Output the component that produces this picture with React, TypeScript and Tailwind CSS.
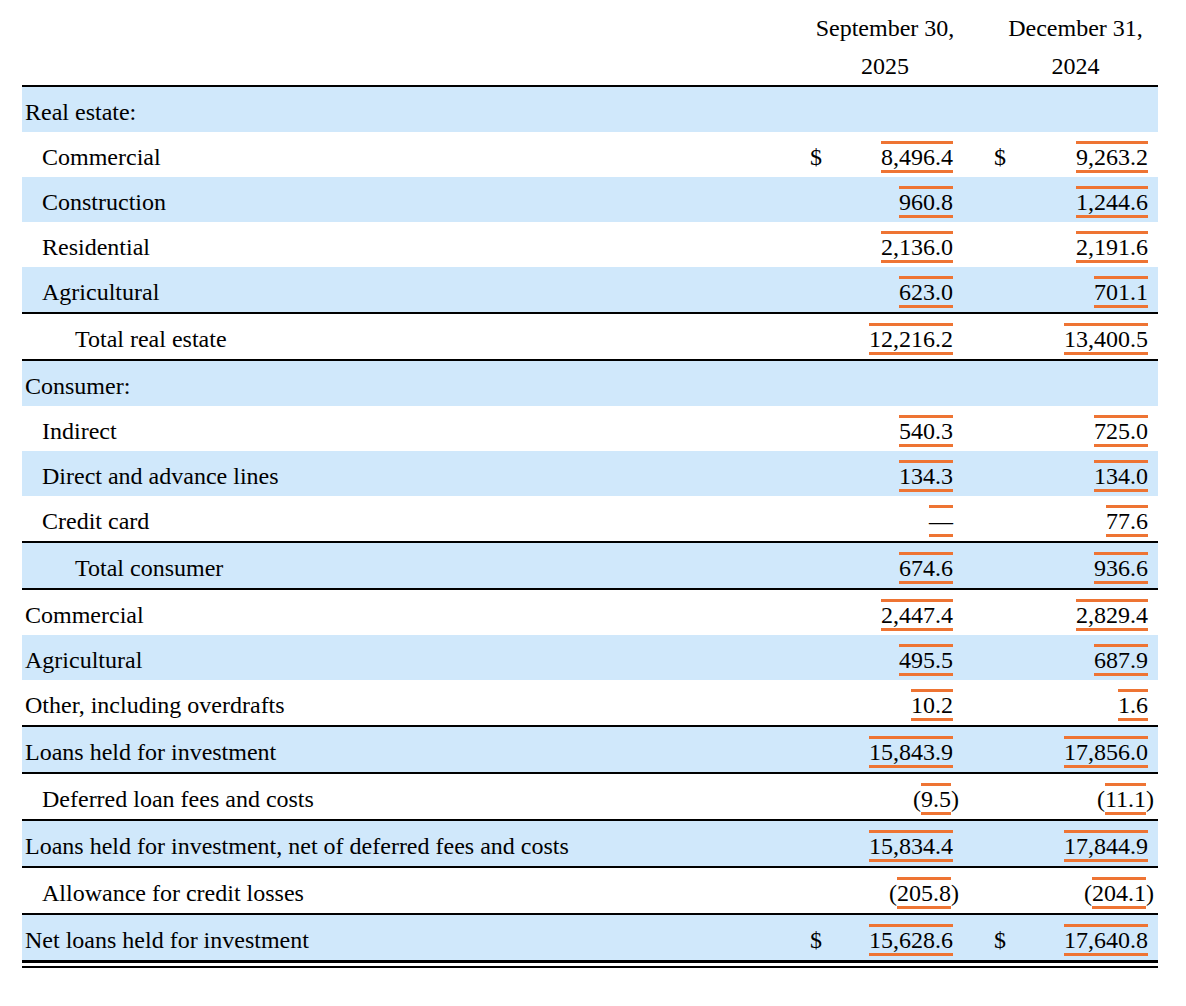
type Row = {
  label: string;
  indent: 0 | 1 | 2;
  a?: string;
  b?: string;
  neg?: boolean;
  dollar?: boolean;
  line?: "single" | "double";
};

const rows: Row[] = [
  { label: "Real estate:", indent: 0 },
  { label: "Commercial", indent: 1, a: "8,496.4", b: "9,263.2", dollar: true },
  { label: "Construction", indent: 1, a: "960.8", b: "1,244.6" },
  { label: "Residential", indent: 1, a: "2,136.0", b: "2,191.6" },
  { label: "Agricultural", indent: 1, a: "623.0", b: "701.1", line: "single" },
  { label: "Total real estate", indent: 2, a: "12,216.2", b: "13,400.5", line: "single" },
  { label: "Consumer:", indent: 0 },
  { label: "Indirect", indent: 1, a: "540.3", b: "725.0" },
  { label: "Direct and advance lines", indent: 1, a: "134.3", b: "134.0" },
  { label: "Credit card", indent: 1, a: "—", b: "77.6", line: "single" },
  { label: "Total consumer", indent: 2, a: "674.6", b: "936.6", line: "single" },
  { label: "Commercial", indent: 0, a: "2,447.4", b: "2,829.4" },
  { label: "Agricultural", indent: 0, a: "495.5", b: "687.9" },
  { label: "Other, including overdrafts", indent: 0, a: "10.2", b: "1.6", line: "single" },
  { label: "Loans held for investment", indent: 0, a: "15,843.9", b: "17,856.0", line: "single" },
  { label: "Deferred loan fees and costs", indent: 1, a: "9.5", b: "11.1", neg: true, line: "single" },
  {
    label: "Loans held for investment, net of deferred fees and costs",
    indent: 0,
    a: "15,834.4",
    b: "17,844.9",
    line: "single",
  },
  { label: "Allowance for credit losses", indent: 1, a: "205.8", b: "204.1", neg: true, line: "single" },
  { label: "Net loans held for investment", indent: 0, a: "15,628.6", b: "17,640.8", dollar: true, line: "double" },
];

const indents = ["pl-[3px]", "pl-[20px]", "pl-[53px]"];

function Amount({ v, neg }: { v?: string; neg?: boolean }) {
  if (!v) return null;
  return (
    <span className="whitespace-nowrap">
      {neg && "("}
      <span className="border-y-[3px] border-[#ee7433]">{v}</span>
      {neg && <span className="-mr-[6px]">)</span>}
    </span>
  );
}

function DataRow({ row, i }: { row: Row; i: number }) {
  const bg = i % 2 === 0 ? "bg-[#d0e8fb]" : "bg-white";
  return (
    <>
      <div className={`flex h-[45px] pt-[5px] leading-[40px] ${bg}`}>
        <div className={`flex-1 whitespace-nowrap ${indents[row.indent]}`}>{row.label}</div>
        <div className="flex w-[153px] justify-between pl-[10px]">
          <span>{row.dollar ? "$" : ""}</span>
          <Amount v={row.a} neg={row.neg} />
        </div>
        <div className="w-[41px]" />
        <div className="flex w-[154px] justify-between">
          <span>{row.dollar ? "$" : ""}</span>
          <Amount v={row.b} neg={row.neg} />
        </div>
        <div className="w-[10px]" />
      </div>
      {row.line === "single" && <div className="h-[2px] bg-black" />}
      {row.line === "double" && (
        <div className="flex flex-col">
          <div className="h-[3px] bg-black" />
          <div className="h-[3px]" />
          <div className="h-[2px] bg-black" />
        </div>
      )}
    </>
  );
}

export default function App() {
  return (
    <div
      className="min-h-[1006px] bg-white text-[24px] text-black"
      style={{ fontFamily: '"Liberation Serif", "Times New Roman", serif' }}
    >
      <div className="ml-[22px] w-[1136px]">
        <div className="flex border-b-2 border-black pt-[9px] leading-[38px]">
          <div className="flex-1" />
          <div className="w-[170px] text-center">
            September 30,
            <br />
            2025
          </div>
          <div className="w-[23px]" />
          <div className="w-[165px] text-center">
            December 31,
            <br />
            2024
          </div>
        </div>
        {rows.map((row, i) => (
          <DataRow key={i} row={row} i={i} />
        ))}
      </div>
    </div>
  );
}
